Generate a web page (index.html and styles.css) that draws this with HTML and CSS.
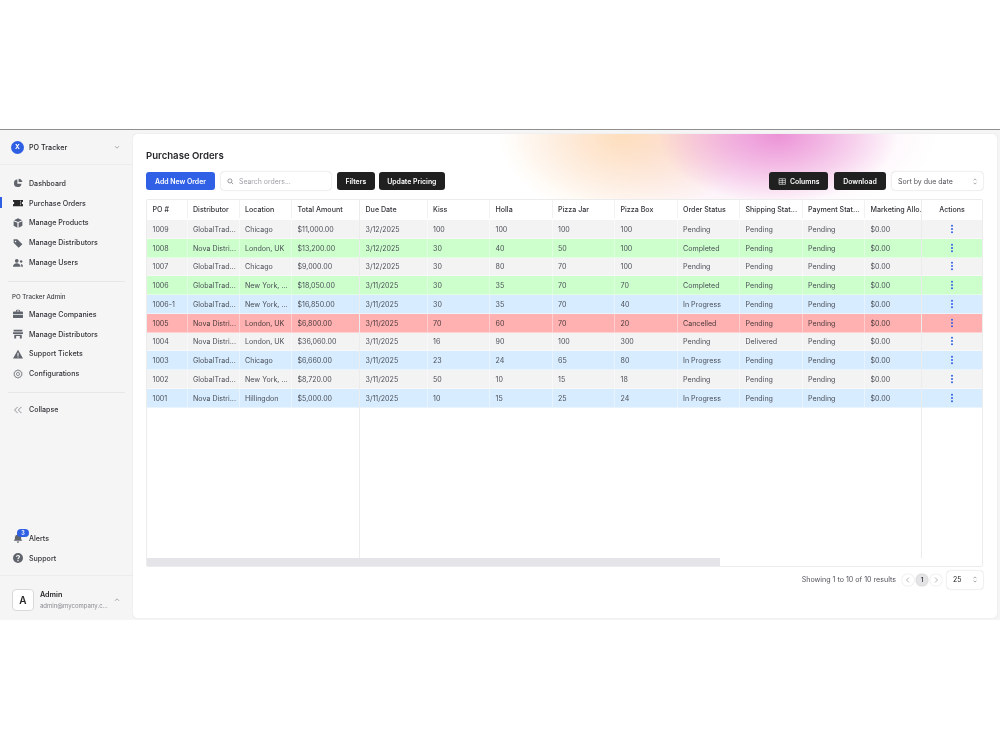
FILE: index.html
```html
<!DOCTYPE html>
<html lang="en">
<head>
<meta charset="utf-8">
<title>Purchase Orders</title>
<link rel="stylesheet" href="styles.css">
</head>
<body>
<div class="app">
  <aside class="sidebar">
    <div class="brand">
      <span class="brand-logo">X</span>
      <span class="brand-name">PO Tracker</span>
      <svg class="chev" viewBox="0 0 10 10"><path d="M2.5 4l2.5 2.5L7.5 4"/></svg>
    </div>
    <nav class="nav">
      <a class="nav-item"><svg class="ico" viewBox="0 0 16 16"><path d="M7 2.5A6 6 0 1 0 13.5 9H7zM9 1v5.500h6A6.500 6.500 0 0 0 9 1z"/></svg>Dashboard</a>
      <a class="nav-item active"><svg class="ico dark" viewBox="0 0 16 16"><path d="M0 3h16v3a2 2 0 0 0 0 4v3H0v-3a2 2 0 0 0 0-4zM11.500 4.500v1.500h1.200V4.500zM11.500 7.200v1.600h1.200V7.200zM11.500 10v1.500h1.200V10z" fill-rule="evenodd"/></svg>Purchase Orders</a>
      <a class="nav-item"><svg class="ico" viewBox="0 0 16 16"><path d="M8 0.500l6.500 3L8 6.300 1.500 3.500zM1 5l6 2.600V15.500L1 12.500zM15 5v7.500l-6 3V7.600z"/></svg>Manage Products</a>
      <a class="nav-item"><svg class="ico" viewBox="0 0 16 16"><path d="M1 2h6l8 8-6 5.500-8-8zM4 4.200a1.200 1.200 0 1 0 .01 0z" fill-rule="evenodd"/></svg>Manage Distributors</a>
      <a class="nav-item"><svg class="ico" viewBox="0 0 16 16"><circle cx="6" cy="4.500" r="3"/><path d="M0 14c0-3.500 2.500-5.500 6-5.500s6 2 6 5.500z"/><circle cx="13" cy="5.500" r="2"/><path d="M13 14h3c0-2.500-1.200-4.500-3.500-4.500a7 7 0 0 1 .5 4.500z"/></svg>Manage Users</a>
    </nav>
    <div class="section-label">PO Tracker Admin</div>
    <nav class="nav">
      <a class="nav-item"><svg class="ico" viewBox="0 0 16 16"><path d="M5 4V2.500A1.500 1.500 0 0 1 6.500 1h3A1.500 1.500 0 0 1 11 2.500V4h3.500A1.500 1.500 0 0 1 16 5.500V8.500H0V5.500A1.500 1.500 0 0 1 1.500 4zM6.500 2.500V4h3V2.500zM0 9.500h16V13a1.500 1.500 0 0 1-1.500 1.500h-13A1.500 1.500 0 0 1 0 13z" fill-rule="evenodd"/></svg>Manage Companies</a>
      <a class="nav-item"><svg class="ico" viewBox="0 0 16 16"><path d="M1 1h14v3H1zM0 5h16v3H0zM2 9h3v6H2zM11 9h3v6h-3zM5 9h6v2H5z"/></svg>Manage Distributors</a>
      <a class="nav-item"><svg class="ico" viewBox="0 0 16 16"><path d="M8 1l8 14H0zM7.200 6v5h1.600V6zM7.200 12v1.500h1.600V12z" fill-rule="evenodd"/></svg>Support Tickets</a>
      <a class="nav-item"><svg class="ico line" viewBox="0 0 16 16"><circle cx="8" cy="8" r="2.500"/><path d="M8 1l1.200 1.900 2.200-.5.500 2.200 2.200.5-.5 2.200L15 8l-1.400.7.500 2.200-2.200.500-.5 2.200-2.200-.5L8 15l-1.200-1.700-2.200.5-.5-2.200-2.200-.5.5-2.200L1 8l1.400-.7-.5-2.200 2.200-.5.500-2.200 2.200.5z"/></svg>Configurations</a>
    </nav>
    <hr class="rule">
    <a class="nav-item"><svg class="ico line" viewBox="0 0 16 16"><path d="M7.500 3L2.500 8l5 5M13.500 3l-5 5 5 5"/></svg>Collapse</a>
    <div class="spacer"></div>
    <a class="nav-item"><svg class="ico" viewBox="0 0 16 16"><path d="M8 0.500a1 1 0 0 1 1 1v.7A5 5 0 0 1 13 7v3l2 2.500H1L3 10V7a5 5 0 0 1 4-4.800v-.7a1 1 0 0 1 1-1zM6 13.500h4a2 2 0 0 1-4 0z"/></svg><span class="badge">3</span>Alerts</a>
    <a class="nav-item"><svg class="ico" viewBox="0 0 16 16"><path d="M8 0a8 8 0 1 1 0 16A8 8 0 0 1 8 0zM7 11v2h2v-2zM8 3C6 3 4.800 4.200 4.700 6h2c0-.7.500-1.200 1.300-1.200s1.200.4 1.200 1c0 1.300-2.200 1.300-2.200 4h2c0-1.700 2.300-2 2.300-4.200C11.300 4 9.900 3 8 3z" fill-rule="evenodd"/></svg>Support</a>
    <div class="user">
      <span class="avatar">A</span>
      <span class="user-text"><span class="user-name">Admin</span><span class="user-mail">admin@mycompany.c...</span></span>
      <svg class="chev" viewBox="0 0 10 10"><path d="M2.5 6L5 3.500 7.500 6"/></svg>
    </div>
  </aside>
  <main class="card">
    <h1 class="title">Purchase Orders</h1>
    <div class="toolbar">
      <button class="btn btn-blue">Add New Order</button>
      <label class="search"><svg viewBox="0 0 12 12"><circle cx="5" cy="5" r="3.500"/><path d="M7.800 7.800L10.500 10.500"/></svg><span>Search orders...</span></label>
      <button class="btn btn-dark">Filters</button>
      <button class="btn btn-dark">Update Pricing</button>
      <span class="grow"></span>
      <button class="btn btn-dark btn-columns"><svg viewBox="0 0 12 12"><path d="M1.500 2h9v8h-9zM1.500 4.700h9M1.500 7.300h9M6 2v8"/></svg>Columns</button>
      <button class="btn btn-dark btn-download">Download</button>
      <div class="select select-sort">Sort by due date<svg viewBox="0 0 8 12"><path d="M2 4.500L4 2.500l2 2M2 7.500l2 2 2-2"/></svg></div>
    </div>
    <div class="grid">
      <div class="panes">
        <div class="pane pane-left">
          <div class="row head"><div class="c c1">PO #</div><div class="c c2">Distributor</div><div class="c c3">Location</div><div class="c c4">Total Amount</div></div>
          <div class="row gray"><div class="c c1">1009</div><div class="c c2">GlobalTrad...</div><div class="c c3">Chicago</div><div class="c c4">$11,000.00</div></div>
          <div class="row green"><div class="c c1">1008</div><div class="c c2">Nova Distri...</div><div class="c c3">London, UK</div><div class="c c4">$13,200.00</div></div>
          <div class="row gray"><div class="c c1">1007</div><div class="c c2">GlobalTrad...</div><div class="c c3">Chicago</div><div class="c c4">$9,000.00</div></div>
          <div class="row green"><div class="c c1">1006</div><div class="c c2">GlobalTrad...</div><div class="c c3">New York, ...</div><div class="c c4">$18,050.00</div></div>
          <div class="row blue"><div class="c c1">1006-1</div><div class="c c2">GlobalTrad...</div><div class="c c3">New York, ...</div><div class="c c4">$16,850.00</div></div>
          <div class="row red"><div class="c c1">1005</div><div class="c c2">Nova Distri...</div><div class="c c3">London, UK</div><div class="c c4">$6,800.00</div></div>
          <div class="row gray"><div class="c c1">1004</div><div class="c c2">Nova Distri...</div><div class="c c3">London, UK</div><div class="c c4">$36,060.00</div></div>
          <div class="row blue"><div class="c c1">1003</div><div class="c c2">GlobalTrad...</div><div class="c c3">Chicago</div><div class="c c4">$6,660.00</div></div>
          <div class="row gray"><div class="c c1">1002</div><div class="c c2">GlobalTrad...</div><div class="c c3">New York, ...</div><div class="c c4">$8,720.00</div></div>
          <div class="row blue"><div class="c c1">1001</div><div class="c c2">Nova Distri...</div><div class="c c3">Hillingdon</div><div class="c c4">$5,000.00</div></div>
        </div>
        <div class="pane pane-mid">
          <div class="row head"><div class="c c5">Due Date</div><div class="c c6">Kiss</div><div class="c c6">Holla</div><div class="c c6">Pizza Jar</div><div class="c c6">Pizza Box</div><div class="c c6">Order Status</div><div class="c c6">Shipping Stat...</div><div class="c c6">Payment Stat...</div><div class="c c7">Marketing Allo.</div></div>
          <div class="row gray"><div class="c c5">3/12/2025</div><div class="c c6">100</div><div class="c c6">100</div><div class="c c6">100</div><div class="c c6">100</div><div class="c c6">Pending</div><div class="c c6">Pending</div><div class="c c6">Pending</div><div class="c c7">$0.00</div></div>
          <div class="row green"><div class="c c5">3/12/2025</div><div class="c c6">30</div><div class="c c6">40</div><div class="c c6">50</div><div class="c c6">100</div><div class="c c6">Completed</div><div class="c c6">Pending</div><div class="c c6">Pending</div><div class="c c7">$0.00</div></div>
          <div class="row gray"><div class="c c5">3/12/2025</div><div class="c c6">30</div><div class="c c6">80</div><div class="c c6">70</div><div class="c c6">100</div><div class="c c6">Pending</div><div class="c c6">Pending</div><div class="c c6">Pending</div><div class="c c7">$0.00</div></div>
          <div class="row green"><div class="c c5">3/11/2025</div><div class="c c6">30</div><div class="c c6">35</div><div class="c c6">70</div><div class="c c6">70</div><div class="c c6">Completed</div><div class="c c6">Pending</div><div class="c c6">Pending</div><div class="c c7">$0.00</div></div>
          <div class="row blue"><div class="c c5">3/11/2025</div><div class="c c6">30</div><div class="c c6">35</div><div class="c c6">70</div><div class="c c6">40</div><div class="c c6">In Progress</div><div class="c c6">Pending</div><div class="c c6">Pending</div><div class="c c7">$0.00</div></div>
          <div class="row red"><div class="c c5">3/11/2025</div><div class="c c6">70</div><div class="c c6">60</div><div class="c c6">70</div><div class="c c6">20</div><div class="c c6">Cancelled</div><div class="c c6">Pending</div><div class="c c6">Pending</div><div class="c c7">$0.00</div></div>
          <div class="row gray"><div class="c c5">3/11/2025</div><div class="c c6">16</div><div class="c c6">90</div><div class="c c6">100</div><div class="c c6">300</div><div class="c c6">Pending</div><div class="c c6">Delivered</div><div class="c c6">Pending</div><div class="c c7">$0.00</div></div>
          <div class="row blue"><div class="c c5">3/11/2025</div><div class="c c6">23</div><div class="c c6">24</div><div class="c c6">65</div><div class="c c6">80</div><div class="c c6">In Progress</div><div class="c c6">Pending</div><div class="c c6">Pending</div><div class="c c7">$0.00</div></div>
          <div class="row gray"><div class="c c5">3/11/2025</div><div class="c c6">50</div><div class="c c6">10</div><div class="c c6">15</div><div class="c c6">18</div><div class="c c6">Pending</div><div class="c c6">Pending</div><div class="c c6">Pending</div><div class="c c7">$0.00</div></div>
          <div class="row blue"><div class="c c5">3/11/2025</div><div class="c c6">10</div><div class="c c6">15</div><div class="c c6">25</div><div class="c c6">24</div><div class="c c6">In Progress</div><div class="c c6">Pending</div><div class="c c6">Pending</div><div class="c c7">$0.00</div></div>
        </div>
        <div class="pane pane-right">
          <div class="row head"><div class="c act">Actions</div></div>
          <div class="row gray"><div class="c act"><i class="dots"></i></div></div>
          <div class="row green"><div class="c act"><i class="dots"></i></div></div>
          <div class="row gray"><div class="c act"><i class="dots"></i></div></div>
          <div class="row green"><div class="c act"><i class="dots"></i></div></div>
          <div class="row blue"><div class="c act"><i class="dots"></i></div></div>
          <div class="row red"><div class="c act"><i class="dots"></i></div></div>
          <div class="row gray"><div class="c act"><i class="dots"></i></div></div>
          <div class="row blue"><div class="c act"><i class="dots"></i></div></div>
          <div class="row gray"><div class="c act"><i class="dots"></i></div></div>
          <div class="row blue"><div class="c act"><i class="dots"></i></div></div>
        </div>
      </div>
      <div class="hscroll"><div class="thumb"></div></div>
    </div>
    <div class="pager">
      <span class="pager-text">Showing 1 to 10 of 10 results</span>
      <span class="pg"><svg viewBox="0 0 8 8"><path d="M5 1.500L2.500 4 5 6.500"/></svg></span>
      <span class="pg pg-on">1</span>
      <span class="pg"><svg viewBox="0 0 8 8"><path d="M3 1.500L5.500 4 3 6.500"/></svg></span>
      <div class="select select-size">25<svg viewBox="0 0 8 12"><path d="M2 4.500L4 2.500l2 2M2 7.500l2 2 2-2"/></svg></div>
    </div>
  </main>
</div>
</body>
</html>
```
FILE: styles.css
```css
* { box-sizing: border-box; }
html, body { margin: 0; padding: 0; background: #fff; }
body { height: 750px; overflow: hidden; padding-top: 129px; font-family: Inter, "Noto Sans", sans-serif; color: #27272a; }

.app { display: flex; height: 491px; background: #f5f5f5; border-top: 1px solid #8f8f8f; padding: 4px 3px 2px 0; filter: blur(.3px); }

.sidebar { width: 133px; flex: none; display: flex; flex-direction: column; }
.brand { height: 31px; margin-bottom: 8.5px; display: flex; align-items: center; padding: 0 12px 4px 11px; border-bottom: 1px solid #ececec; }
.brand-logo { width: 13px; height: 13px; border-radius: 50%; background: #2f5fe3; color: #fff; font-size: 6.5px; font-weight: 700; display: flex; align-items: center; justify-content: center; margin-right: 5px; }
.brand-name { flex: 1; font-size: 7.2px; font-weight: 500; }
.chev { width: 8px; height: 8px; fill: none; stroke: #8a8a92; stroke-width: .9; }

.nav { display: flex; flex-direction: column; }
.nav-item { height: 19.8px; display: flex; align-items: center; padding-left: 13px; font-size: 7.1px; font-weight: 500; color: #33333a; position: relative; }
.nav-item.active::before { content: ""; position: absolute; left: 0; top: 4px; width: 1.5px; height: 11px; background: #2f5fe3; }
.ico { width: 10px; height: 10px; margin-right: 6px; fill: #60646c; flex: none; }
.ico.dark { fill: #27272a; }
.ico.line { fill: none; stroke: #60646c; stroke-width: 1.1; }

.section-label { margin: 9px 8px 0; padding: 11px 4px 0; border-top: 1px solid #e7e7e7; font-size: 6.2px; font-weight: 500; color: #3f3f46; height: 23px; }
.rule { width: 117px; margin: 8px 8px 7px; border: 0; border-top: 1px solid #e7e7e7; }
.spacer { flex: 1; }
.badge { position: absolute; left: 17px; top: .5px; width: 12px; height: 8px; border-radius: 4px; background: #2f5fe3; color: #fff; font-size: 5.5px; font-weight: 600; display: flex; align-items: center; justify-content: center; }
.user { height: 43px; margin-top: 7px; display: flex; align-items: center; padding: 5px 12px 0 12px; border-top: 1px solid #ececec; }
.avatar { width: 22px; height: 22px; border: 1px solid #d9d9d9; border-radius: 4px; background: #fff; display: flex; align-items: center; justify-content: center; font-size: 10px; font-weight: 600; margin-right: 6px; flex: none; }
.user-text { flex: 1; display: flex; flex-direction: column; gap: 3px; min-width: 0; }
.user-name { font-size: 7.2px; font-weight: 600; }
.user-mail { font-size: 6px; color: #8a8a92; white-space: nowrap; }

.card { flex: 1; min-width: 0; background-color: #fff; border-radius: 4px; box-shadow: 0 0 1px rgba(0,0,0,.2); padding: 15px 14px 0 13px; display: flex; flex-direction: column;
  background-image:
    radial-gradient(ellipse 120px 70px at 645px 0, rgba(232,125,208,.8), rgba(232,125,208,0) 100%),
    radial-gradient(ellipse 125px 85px at 490px 0, rgba(255,212,150,.6), rgba(255,225,180,0) 100%),
    radial-gradient(ellipse 215px 90px at 590px 0, rgba(245,195,225,.55), rgba(245,195,225,0) 100%);
  background-repeat: no-repeat; }
.title { margin: 0 0 10px; font-size: 9.6px; line-height: 13px; font-weight: 600; color: #27272a; }
.toolbar { display: flex; align-items: center; height: 18px; margin-bottom: 9px; }
.btn { height: 18px; border: 0; border-radius: 3px; padding: 0 8.5px; font-family: inherit; font-size: 6.9px; font-weight: 600; color: #fff; display: flex; align-items: center; margin-right: 4px; }
.btn-blue { background: #2f60e6; width: 69px; justify-content: center; padding: 0; margin-right: 6px; }
.btn-dark { background: #202020; }
.btn-columns { width: 59px; margin-right: 6px; }
.btn-columns svg { width: 9px; height: 9px; fill: none; stroke: #fff; stroke-width: .8; margin-right: 4px; }
.btn-download { width: 52px; justify-content: center; padding: 0; }
.search { width: 110px; height: 18px; margin-right: 6px; background: #fff; border-radius: 3px; box-shadow: 0 0 1.5px rgba(0,0,0,.3); display: flex; align-items: center; padding-left: 6px; font-size: 6.9px; color: #a1a1aa; }
.search svg { width: 7px; height: 7px; margin-right: 5px; fill: none; stroke: #52525b; stroke-width: 1; }
.grow { flex: 1; }
.select { background: #fff; border-radius: 3px; box-shadow: 0 0 1.5px rgba(0,0,0,.3); display: flex; align-items: center; justify-content: space-between; font-size: 7px; color: #52525b; height: 18px; }
.select svg { width: 6px; height: 9px; fill: none; stroke: #71717a; stroke-width: .8; }
.select-sort { width: 91px; padding: 0 5px 0 6px; margin-left: 2px; }
.select-size { width: 36px; padding: 0 5px 0 6px; margin-left: 5px; color: #27272a; }

.grid { height: 368px; border: 1px solid #ececec; border-radius: 2px; display: flex; flex-direction: column; background: #fff; }
.panes { flex: 1; display: flex; min-height: 0; }
.pane-left { width: 213px; border-right: 1px solid #ececec; }
.pane-mid { flex: 1; min-width: 0; }
.pane-right { width: 61px; border-left: 1px solid #ececec; }
.row { display: flex; height: 18.75px; font-size: 7.1px; color: #4b4f57; border-bottom: 1px solid rgba(255,255,255,.45); }
.row.head { height: 20px; padding-bottom: 2px; background: #fff; color: #33333a; font-weight: 500; border-bottom: 0; }
.gray { background: #f3f3f3; }
.green { background: #ccffcc; }
.blue { background: #d7ecff; }
.red { background: #ffb0b0; color: #4b3a3c; }
.c { display: flex; align-items: center; padding: 1px 0 0 5.5px; border-right: 1px solid rgba(255,255,255,.4); white-space: nowrap; overflow: hidden; flex: none; }
.head .c { border-right-color: #f2f2f2; }
.c1 { width: 40.5px; }
.c2 { width: 52px; }
.c3 { width: 52.5px; }
.c4 { width: 67px; border-right: 0; }
.c5 { width: 67.5px; }
.c6 { width: 62.5px; }
.c7 { width: 56.5px; border-right: 0; }
.act { width: 100%; justify-content: center; padding: 0; border-right: 0; }
.dots { width: 2px; height: 2px; background: #2f60e6; border-radius: 50%; box-shadow: 0 -3.2px 0 #2f60e6, 0 3.2px 0 #2f60e6; display: block; }
.hscroll { height: 8px; background: #fff; flex: none; }
.thumb { width: 573px; height: 8px; background: #e4e4e9; }

.pager { display: flex; align-items: center; justify-content: flex-end; height: 25px; }
.pager-text { font-size: 7.1px; color: #52525b; margin-right: 4px; }
.pg { width: 12px; height: 12px; border-radius: 50%; margin-left: 2px; background: #fff; box-shadow: 0 0 1.5px rgba(0,0,0,.2); display: flex; align-items: center; justify-content: center; font-size: 6.5px; font-weight: 600; color: #3f3f46; }
.pg svg { width: 8px; height: 8px; fill: none; stroke: #a1a1aa; stroke-width: .8; }
.pg-on { background: #e4e4e7; box-shadow: 0 0 1.5px rgba(0,0,0,.35); }
```
